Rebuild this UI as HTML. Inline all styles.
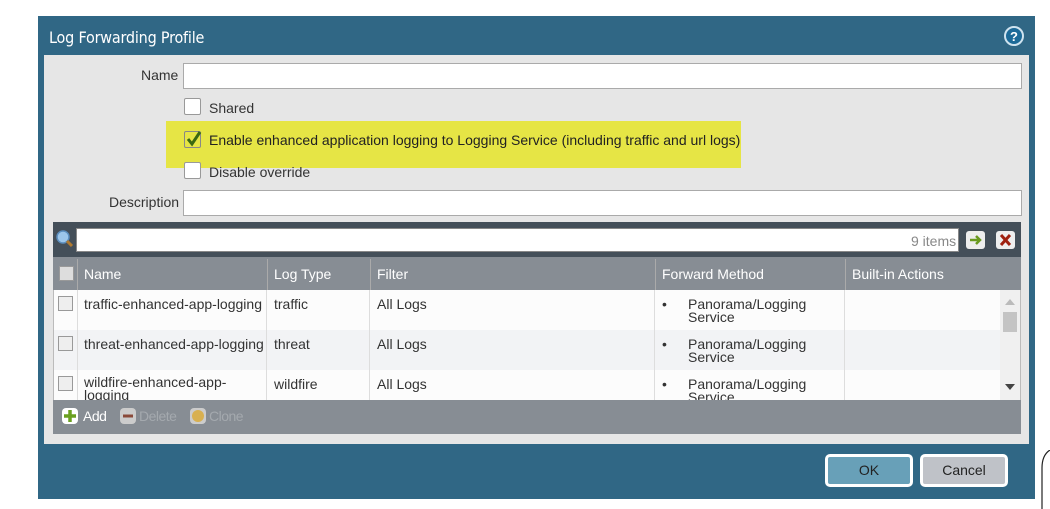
<!DOCTYPE html>
<html><head><meta charset="utf-8"><style>
*{box-sizing:border-box;margin:0;padding:0}
body{width:1050px;height:509px;background:#fff;position:relative;overflow:hidden;font-family:"Liberation Sans",sans-serif;font-size:14px;color:#333}
.abs{position:absolute}
.dlg{left:38px;top:16px;width:997px;height:483px;background:#306785}
.title{left:49px;top:28px;color:#fff;font-size:16px;font-family:"DejaVu Sans Condensed","DejaVu Sans",sans-serif;letter-spacing:-0.2px}
.panel{left:44px;top:55px;width:985px;height:389px;background:#e6e6e6}
.inp{background:#fff;border:1px solid #aaa}
.lbl{color:#333;font-size:14px}
.cb{width:17px;height:17px;background:#fff;border:1px solid #999;border-radius:2px}
.grid{left:53px;top:222px;width:968px;height:212px;background:#fafafa;border:1px solid #bbb}
.hdr{color:#fff;font-size:14px}
.sm{width:15px;height:15px;background:#eee;border:1px solid #999}
.btn{border:3px solid #fff;border-radius:5px;font-size:14px;text-align:center;line-height:27px;color:#222}
.row{font-size:14px}
</style></head><body>
<div class="abs dlg"></div>
<div class="abs title">Log Forwarding Profile</div>
<svg class="abs" style="left:1004px;top:26px" width="20" height="20"><circle cx="10" cy="10" r="9" fill="#1c6a98" stroke="#cfe3ef" stroke-width="2"/><text x="10" y="15" font-size="13" font-weight="bold" fill="#fff" text-anchor="middle" font-family="Liberation Sans">?</text></svg>
<div class="abs panel"></div>
<div class="abs lbl" style="left:141px;top:67px">Name</div>
<div class="abs inp" style="left:183px;top:63px;width:839px;height:26px"></div>
<div class="abs cb" style="left:184px;top:98px"></div>
<div class="abs lbl" style="left:209px;top:100px">Shared</div>
<div class="abs" style="left:166px;top:121px;width:575px;height:47px;background:#e6e545"></div>
<div class="abs cb" style="left:184px;top:131px;background:#e6e545;border-color:#888"></div>
<svg class="abs" style="left:185px;top:129px" width="18" height="18"><path d="M3 10 L7 15 L15 3" fill="none" stroke="#3a6a10" stroke-width="3"/></svg>
<div class="abs lbl" style="left:209px;top:132px;color:#222">Enable enhanced application logging to Logging Service (including traffic and url logs)</div>
<div class="abs cb" style="left:184px;top:162px"></div>
<div class="abs lbl" style="left:209px;top:164px">Disable override</div>
<div class="abs lbl" style="left:109px;top:194px">Description</div>
<div class="abs inp" style="left:183px;top:190px;width:839px;height:26px"></div>

<div class="abs grid"></div>
<div class="abs" style="left:53px;top:222px;width:968px;height:35px;background:#444f59"></div>
<svg class="abs" style="left:55px;top:229px" width="20" height="20"><circle cx="8" cy="8" r="6" fill="#9cc6ea" stroke="#5c8fbf" stroke-width="1.5"/><path d="M12 12 L17 17" stroke="#b07a30" stroke-width="3"/></svg>
<div class="abs inp" style="left:76px;top:228px;width:883px;height:24px;border-color:#888"></div>
<div class="abs" style="left:911px;top:233px;color:#888;font-size:14px">9 items</div>
<div class="abs" style="left:966px;top:231px;width:19px;height:18px;background:#eee;border-radius:3px"></div>
<svg class="abs" style="left:966px;top:231px" width="19" height="18"><path d="M4 9 H14 M10 5 L14 9 L10 13" fill="none" stroke="#6a9a20" stroke-width="2.5"/></svg>
<div class="abs" style="left:996px;top:231px;width:19px;height:18px;background:#eee;border-radius:3px"></div>
<svg class="abs" style="left:996px;top:231px" width="19" height="18"><path d="M5 4 L14 14 M14 4 L5 14" stroke="#a02010" stroke-width="3"/></svg>

<div class="abs" style="left:53px;top:257px;width:968px;height:33px;background:#878d94"></div>
<div class="abs sm" style="left:59px;top:266px;background:#ddd"></div>
<div class="abs" style="left:77px;top:259px;width:1px;height:31px;background:#aaa"></div>
<div class="abs" style="left:267px;top:259px;width:1px;height:31px;background:#aaa"></div>
<div class="abs" style="left:370px;top:259px;width:1px;height:31px;background:#aaa"></div>
<div class="abs" style="left:655px;top:259px;width:1px;height:31px;background:#aaa"></div>
<div class="abs" style="left:845px;top:259px;width:1px;height:31px;background:#aaa"></div>
<div class="abs hdr" style="left:84px;top:266px">Name</div>
<div class="abs hdr" style="left:274px;top:266px">Log Type</div>
<div class="abs hdr" style="left:377px;top:266px">Filter</div>
<div class="abs hdr" style="left:662px;top:266px">Forward Method</div>
<div class="abs hdr" style="left:852px;top:266px">Built-in Actions</div>

<div class="abs" style="left:54px;top:290px;width:946px;height:40px;background:#fcfcfc"></div>
<div class="abs" style="left:54px;top:330px;width:946px;height:40px;background:#f2f3f5"></div>
<div class="abs" style="left:54px;top:370px;width:946px;height:30px;background:#fcfcfc;overflow:hidden"></div>
<div class="abs" style="left:77px;top:290px;width:1px;height:110px;background:#ddd"></div>
<div class="abs" style="left:266px;top:290px;width:1px;height:110px;background:#ddd"></div>
<div class="abs" style="left:369px;top:290px;width:1px;height:110px;background:#ddd"></div>
<div class="abs" style="left:654px;top:290px;width:1px;height:110px;background:#ddd"></div>
<div class="abs" style="left:844px;top:290px;width:1px;height:110px;background:#ddd"></div>
<div class="abs" style="left:1000px;top:290px;width:20px;height:110px;background:#f0f0f0"></div>
<svg class="abs" style="left:1003px;top:296px" width="14" height="100"><path d="M2 9 L7 3 L12 9Z" fill="#bbb"/><rect x="0" y="16" width="16" height="20" fill="#c4c4c4"/><path d="M2 88 L7 94 L12 88Z" fill="#444"/></svg>
<div class="abs row" style="left:53px;top:290px;width:947px;height:110px;overflow:hidden">
 <div class="abs sm" style="left:5px;top:6px"></div>
 <div class="abs" style="left:31px;top:6px">traffic-enhanced-app-logging</div>
 <div class="abs" style="left:221px;top:6px">traffic</div>
 <div class="abs" style="left:324px;top:6px">All Logs</div>
 <div class="abs" style="left:609px;top:8px;line-height:13px">•</div>
 <div class="abs" style="left:635px;top:8px;line-height:13px">Panorama/Logging<br>Service</div>
 <div class="abs sm" style="left:5px;top:46px"></div>
 <div class="abs" style="left:31px;top:46px">threat-enhanced-app-logging</div>
 <div class="abs" style="left:221px;top:46px">threat</div>
 <div class="abs" style="left:324px;top:46px">All Logs</div>
 <div class="abs" style="left:609px;top:48px;line-height:13px">•</div>
 <div class="abs" style="left:635px;top:48px;line-height:13px">Panorama/Logging<br>Service</div>
 <div class="abs sm" style="left:5px;top:86px"></div>
 <div class="abs" style="left:31px;top:86px;line-height:13px">wildfire-enhanced-app-<br>logging</div>
 <div class="abs" style="left:221px;top:86px">wildfire</div>
 <div class="abs" style="left:324px;top:86px">All Logs</div>
 <div class="abs" style="left:609px;top:88px;line-height:13px">•</div>
 <div class="abs" style="left:635px;top:88px;line-height:13px">Panorama/Logging<br>Service</div>
</div>

<div class="abs" style="left:53px;top:400px;width:968px;height:34px;background:#878d94"></div>
<svg class="abs" style="left:61px;top:407px" width="18" height="18"><rect x="1" y="1" width="16" height="16" rx="4" fill="#fff"/><path d="M9 3 V15 M3 9 H15" stroke="#6aa020" stroke-width="3.5"/></svg>
<div class="abs" style="left:83px;top:408px;color:#fff;font-size:14px;letter-spacing:-0.5px">Add</div>
<svg class="abs" style="left:119px;top:407px" width="18" height="18"><rect x="1" y="1" width="16" height="16" rx="4" fill="#ccc"/><path d="M4 9 H14" stroke="#8a4a3a" stroke-width="3"/></svg>
<div class="abs" style="left:139px;top:408px;color:#a4a9ae;font-size:14px;letter-spacing:-0.5px">Delete</div>
<svg class="abs" style="left:189px;top:407px" width="18" height="18"><rect x="1" y="1" width="16" height="16" rx="4" fill="#ccc"/><circle cx="9" cy="9" r="6" fill="#d8b050"/></svg>
<div class="abs" style="left:209px;top:408px;color:#a4a9ae;font-size:14px;letter-spacing:-0.5px">Clone</div>

<div class="abs btn" style="left:825px;top:454px;width:88px;height:33px;background:#68a0b8">OK</div>
<div class="abs btn" style="left:920px;top:454px;width:88px;height:33px;background:#bfc2c8">Cancel</div>
<svg class="abs" style="left:1038px;top:450px" width="12" height="59"><path d="M4 59 V18 Q4 5 12 0" fill="none" stroke="#222" stroke-width="1.2"/></svg>
</body></html>
